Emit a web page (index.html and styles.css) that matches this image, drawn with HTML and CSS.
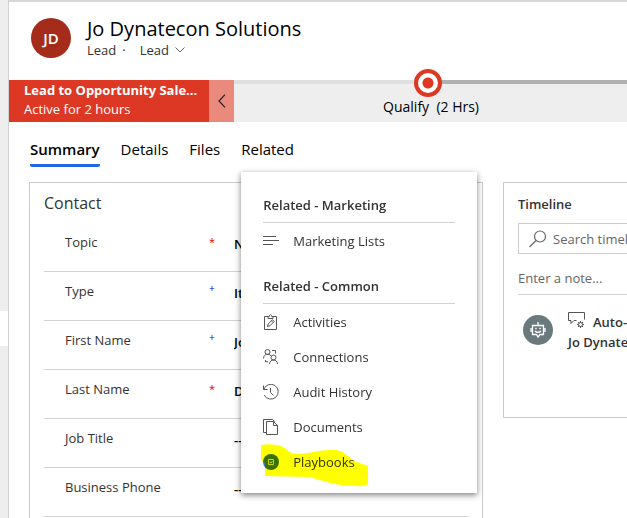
FILE: index.html
```html
<!DOCTYPE html>
<html lang="en">

<head>
    <meta charset="UTF-8">
    <meta name="viewport" content="width=device-width, initial-scale=1.0">
    <title>Lead: Jo Dynatecon Solutions</title>
    <link rel="stylesheet" href="styles.css">
</head>

<body>
    <aside class="sidebar">
        <div class="sidebar-block sidebar-top"></div>
        <div class="sidebar-block sidebar-rest"></div>
    </aside>

    <main class="main">
        <header class="record-header">
            <div class="avatar">JD</div>
            <div>
                <h1>Jo Dynatecon Solutions</h1>
                <div class="record-type">
                    <span>Lead</span>
                    <span class="dot">·</span>
                    <button class="form-switch" type="button">Lead
                        <svg width="10" height="6" viewBox="0 0 10 6" fill="none" stroke="#666"><path d="M0.5 0.5 5 5 9.5 0.5" /></svg>
                    </button>
                </div>
            </div>
        </header>

        <section class="process">
            <div class="process-name">
                <strong>Lead to Opportunity Sale...</strong>
                <span>Active for 2 hours</span>
            </div>
            <button class="process-back" type="button" aria-label="Previous stage">
                <svg width="8" height="14" viewBox="0 0 8 14" fill="none" stroke="#222" stroke-width="1.2"><path d="M7 0.7 1 7 7 13.3" /></svg>
            </button>
            <div class="stages">
                <div class="stage">
                    <button class="stage-dot" type="button" aria-label="Qualify stage"></button>
                    <span class="stage-label">Qualify&nbsp; (2 Hrs)</span>
                </div>
            </div>
        </section>

        <nav class="tabs">
            <a class="tab active" href="#summary">Summary</a>
            <a class="tab" href="#details">Details</a>
            <a class="tab" href="#files">Files</a>
            <div class="related">
                <a class="tab" href="#related">Related</a>

                <!-- Related menu -->
                <div class="menu">
                    <h3>Related - Marketing</h3>
                    <a class="menu-item" href="#lists">
                        <svg width="16" height="16" viewBox="0 0 16 16" fill="none" stroke="#555"><path d="M0 3.5h13M0 7.5h16M0 11.5h10" /></svg>
                        Marketing Lists
                    </a>
                    <h3>Related - Common</h3>
                    <a class="menu-item" href="#activities">
                        <svg width="16" height="16" viewBox="0 0 16 16" fill="none" stroke="#555"><path d="M5 2.5H1.5v13h12v-13H10M5 4.5v-2h1.3c0-2.6 2.4-2.6 2.4 0H10v2zM4.5 12.5l.7-2.5 4.3-4.3 1.7 1.7L7 11.7zM8.4 6.8l1.7 1.7" /></svg>
                        Activities
                    </a>
                    <a class="menu-item" href="#connections">
                        <svg width="16" height="16" viewBox="0 0 16 16" fill="none" stroke="#555"><circle cx="4.500" cy="3" r="2.500" /><circle cx="10.500" cy="8.500" r="2.500" /><path d="M.5 9.500c0-5 6-5.500 7.500-2.500M6.500 15c0-5.300 8-5.300 8 0M9 1.500h3.500V4.500M2.500 11v1.800H5" /></svg>
                        Connections
                    </a>
                    <a class="menu-item" href="#audit">
                        <svg width="16" height="16" viewBox="0 0 16 16" fill="none" stroke="#555"><path d="M.5 1.500V5.500h4M.8 5.400A7.400 7.400 0 1 1 1.200 11M7.500 4v4.500l3 3" /></svg>
                        Audit History
                    </a>
                    <a class="menu-item" href="#documents">
                        <svg width="16" height="16" viewBox="0 0 16 16" fill="none" stroke="#555"><path d="M3.500 13.500H.5V.5h9l2 2M3.500 2.500h7l4 4v9h-11zM10.500 2.500v4h4" /></svg>
                        Documents
                    </a>
                    <a class="menu-item playbooks" href="#playbooks">
                        <svg width="16" height="16" viewBox="0 0 16 16" fill="none"><circle cx="8" cy="8" r="8" fill="#3a73c4" /><path d="M5.500 5.500h5v5h-5zM7 8l1 1 1.500-2" stroke="#c8d860" /></svg>
                        Playbooks
                        <svg class="marker" width="108" height="44" viewBox="0 0 108 44"><path d="M0 1Q10-1 20 2C27 5 28 10 36 10L48 9C56 7 60 6 75 6C86 8 88 15 96 18L107 22V40Q103 43 94 42C76 42 62 37 48 33L4 32V19L0 16Z" fill="#ff0" /></svg>
                    </a>
                </div>
            </div>
        </nav>

        <div class="columns">
            <section class="card contact">
                <h2>Contact</h2>
                <div class="field">
                    <label for="topic">Topic</label>
                    <span class="mark required">*</span>
                    <input id="topic" type="text" value="N">
                </div>
                <div class="field">
                    <label for="type">Type</label>
                    <span class="mark recommended">+</span>
                    <input id="type" type="text" value="It">
                </div>
                <div class="field">
                    <label for="first-name">First Name</label>
                    <span class="mark recommended">+</span>
                    <input id="first-name" type="text" value="Jo">
                </div>
                <div class="field">
                    <label for="last-name">Last Name</label>
                    <span class="mark required">*</span>
                    <input id="last-name" type="text" value="D">
                </div>
                <div class="field">
                    <label for="job-title">Job Title</label>
                    <span class="mark"></span>
                    <input id="job-title" type="text" value="---">
                </div>
                <div class="field">
                    <label for="phone">Business Phone</label>
                    <span class="mark"></span>
                    <input id="phone" type="text" value="---">
                </div>
            </section>

            <section class="card timeline">
                <h2>Timeline</h2>
                <label class="search">
                    <svg width="18" height="18" viewBox="0 0 18 18" fill="none" stroke="#666" stroke-width="1.2"><circle cx="11" cy="6.500" r="5.500" /><path d="M7 10.500.5 17" /></svg>
                    <input type="text" placeholder="Search timeline" aria-label="Search timeline">
                </label>
                <input class="note" type="text" placeholder="Enter a note..." aria-label="Enter a note">
                <article class="post">
                    <div class="bot">
                        <svg width="16" height="18" viewBox="0 0 16 18" fill="none" stroke="#fff" stroke-width="1.3"><path d="M8 4.500V1M2.500 4.500h11v9H10L8 16l-1.500-2.500h-4zM1 7v4M15 7v4M5.200 7.500h1.500M9.300 7.500h1.500M5 10c1.500 1.800 4.500 1.800 6 0" /></svg>
                    </div>
                    <div class="post-text">
                        <div class="post-title">
                            <svg width="18" height="17" viewBox="0 0 18 17" fill="none" stroke="#555"><path d="M8.500 8.500H6l-3 3v-3H.5v-8h16v7" /><circle cx="12.500" cy="12.500" r="2" /><path d="M12.500 9v1.500M12.500 14.500V16M9 12.500h1.500M14.500 12.500H16M10 10l1 1M14 14l1 1M15 10l-1 1M11 14l-1 1" /></svg>
                            Auto-post
                        </div>
                        <div>Jo Dynatecon</div>
                    </div>
                </article>
            </section>
        </div>
    </main>
</body>

</html>
```
FILE: styles.css
```css
* {
    box-sizing: border-box;
}

body {
    display: flex;
    height: 100vh;
    margin: 0;
    background-color: #ffffff;
    color: #333333;
    font-family: "Open Sans", "Noto Sans", sans-serif;
    font-size: 13px;
    line-height: 20px;
    overflow: hidden;
}

h1,
h2,
h3 {
    margin: 0;
}

a {
    color: inherit;
    text-decoration: none;
}

button,
input {
    font: inherit;
    color: inherit;
    border: none;
    background: none;
    padding: 0;
    min-width: 0;
}

svg {
    flex: none;
}

/* Left rail */
.sidebar {
    display: flex;
    flex-direction: column;
    flex: none;
    width: 9px;
    gap: 35px;
    border-right: 1px solid #d2d2d2;
}

.sidebar-block {
    background-color: #eeeeee;
}

.sidebar-top {
    flex: 311;
}

.sidebar-rest {
    flex: 172;
}

.main {
    flex: 1;
    min-width: 0;
    border-top: 2px solid #d8d8d8;
    overflow: hidden;
}

/* Record header */
.record-header {
    display: flex;
    gap: 16px;
    height: 78px;
    padding: 16px 22px;
}

.avatar {
    display: flex;
    justify-content: center;
    align-items: center;
    flex: none;
    width: 40px;
    height: 40px;
    border-radius: 50%;
    background-color: #a52b1b;
    color: #ffffff;
    font-size: 15px;
    font-weight: 600;
}

h1 {
    color: #000000;
    font-size: 20px;
    font-weight: 400;
    line-height: 22px;
}

.record-type {
    display: flex;
}

.dot {
    margin: 0 14px 0 6px;
}

.form-switch {
    display: flex;
    align-items: center;
    gap: 6px;
}

/* Process bar */
.process {
    display: flex;
    height: 42px;
    background-color: #eeeeee;
}

.process-name {
    display: flex;
    flex-direction: column;
    flex: none;
    width: 200px;
    padding: 1px 15px;
    background-color: #dc3824;
    color: #ffffff;
    line-height: 19px;
}

.process-name strong {
    font-weight: 700;
    white-space: nowrap;
}

.process-back {
    flex: none;
    width: 25px;
    background-color: #ea8a7d;
}

.process-back svg {
    display: block;
    margin: 0 auto;
}

.stages {
    flex: 1;
    border-top: 4px solid #b0b0b0;
}

.stage {
    display: flex;
    flex-direction: column;
    align-items: center;
    width: 194px;
    margin-top: -4px;
    border-top: 4px solid #e0e0e0;
    /* the dot sits on the end of the finished line */
    position: relative;
    color: #000000;
}

.stage-dot {
    position: absolute;
    top: -15px;
    right: -14px;
    width: 28px;
    height: 28px;
    border: 4px solid #dc3824;
    border-radius: 50%;
    background: radial-gradient(circle, #dc3824 5px, #ffffff 6px);
}

.stage-label {
    align-self: flex-end;
    margin: 13px -51px 0 0;
    font-size: 14px;
    white-space: nowrap;
}

/* Tabs */
.tabs {
    display: flex;
    gap: 21px;
    height: 60px;
    padding: 17px 21px 0;
    color: #000000;
    font-size: 15px;
}

.tab {
    display: block;
    height: 28px;
    line-height: 20px;
}

.tab.active {
    border-bottom: 3px solid #2266e3;
    border-radius: 2px;
    font-weight: 600;
}

.related {
    position: relative;
}

/* Related menu */
.menu {
    position: absolute;
    top: 33px;
    left: 0;
    z-index: 1;
    width: 236px;
    padding: 15px 22px 14px;
    background-color: #ffffff;
    box-shadow: 0 2px 6px rgba(0, 0, 0, 0.5);
    color: #333333;
    font-size: 13px;
}

.menu h3 {
    height: 36px;
    padding-top: 8px;
    border-bottom: 1px solid #d2d2d2;
    font-size: 13px;
    font-weight: 600;
}

.menu-item {
    display: flex;
    align-items: center;
    gap: 14px;
    height: 35px;
}

.menu-item + h3 {
    margin-top: 10px;
}

.playbooks {
    position: relative;
}

/* highlighter stroke over the item */
.marker {
    position: absolute;
    top: 0;
    left: -2px;
    mix-blend-mode: multiply;
}

/* Cards */
.columns {
    display: grid;
    grid-template-columns: minmax(454px, 1fr) 454px;
    align-items: start;
    gap: 20px;
    padding: 0 20px;
}

.card {
    border: 1px solid #cccccc;
    padding: 0 14px;
}

.contact {
    padding-bottom: 20px;
}

.contact h2 {
    height: 40px;
    font-size: 16px;
    font-weight: 400;
    line-height: 40px;
}

.field {
    display: grid;
    grid-template-columns: 142px 27px 1fr;
    height: 49px;
    padding: 9px 0 0 21px;
    border-bottom: 1px solid #d2d2d2;
    line-height: 20px;
}

.field input {
    height: 24px;
    color: #000000;
    font-weight: 600;
}

.mark {
    padding-left: 2px;
    font-size: 11px;
    line-height: 20px;
}

.required {
    color: #e00000;
}

.recommended {
    font-size: 10px;
    line-height: 14px;
    color: #0000dd;
}

.timeline {
    height: 236px;
}

.timeline h2 {
    height: 40px;
    font-size: 13px;
    font-weight: 600;
    line-height: 42px;
}

.search {
    display: flex;
    align-items: center;
    gap: 6px;
    height: 31px;
    padding: 0 10px;
    border: 1px solid #cccccc;
}

.search input {
    flex: 1;
}

.timeline ::placeholder {
    color: #666666;
    opacity: 1;
}

.note {
    width: 100%;
    height: 41px;
    padding-top: 7px;
    border-bottom: 1px solid #d2d2d2;
}

.post {
    display: flex;
    gap: 15px;
    padding: 17px 5px;
    font-weight: 600;
}

.bot {
    display: flex;
    justify-content: center;
    align-items: center;
    width: 30px;
    height: 30px;
    margin-top: 3px;
    border-radius: 50%;
    background-color: #69797e;
}

.post-title {
    display: flex;
    gap: 7px;
}
```
